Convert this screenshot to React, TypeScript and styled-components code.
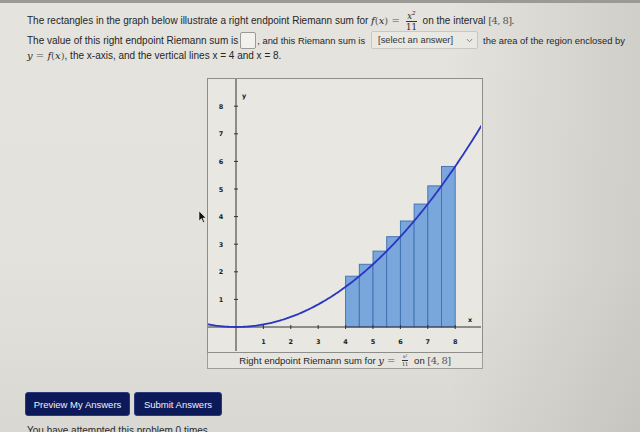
import React from "react";
import styled, { createGlobalStyle } from "styled-components";

const Global = createGlobalStyle`
  html, body { margin: 0; padding: 0; }
  body {
    width: 640px;
    height: 432px;
    overflow: hidden;
    font-family: "Liberation Sans", Arial, sans-serif;
    color: #262626;
    background:
      linear-gradient(90deg, rgba(0,0,0,0) 70%, rgba(60,60,50,0.12) 100%),
      linear-gradient(180deg, #e4e3de 0%, #e3e2dd 60%, #d9d8d2 100%);
  }
`;

const Page = styled.div`
  position: relative;
  width: 640px;
  height: 432px;
  box-sizing: border-box;
  padding: 5px 0 0 27px;
  border-top: 3px solid #9a9a96;
`;

const Line = styled.div<{ $h: number; $mt?: number }>`
  display: flex;
  align-items: center;
  height: ${(p) => p.$h}px;
  margin-top: ${(p) => p.$mt ?? 0}px;
  font-size: 10px;
  white-space: pre;
`;

const Seg = styled.span<{ $s: number }>`
  font-size: ${(p) => p.$s}px;
`;

const MathI = styled.span`
  font-family: "DejaVu Serif", "Liberation Serif", serif;
  font-style: italic;
  font-size: 10px;
`;

const MathR = styled.span<{ $tight?: boolean }>`
  font-family: "DejaVu Serif", "Liberation Serif", serif;
  font-size: 10px;
  color: #555;
  letter-spacing: ${(p) => (p.$tight ? "-0.6px" : "0")};
`;

const Frac = styled.span<{ $s?: number }>`
  display: inline-flex;
  flex-direction: column;
  align-items: center;
  margin: 0 3px;
  font-family: "DejaVu Serif", "Liberation Serif", serif;
  font-size: ${(p) => p.$s ?? 8.5}px;
  line-height: ${(p) => (p.$s ?? 8.5) + 2}px;
`;

const FracTop = styled.span`
  font-style: italic;
  border-bottom: 0.8px solid #333;
  padding: 0 1px;
`;

const Sup = styled.sup`
  font-size: 0.65em;
`;

const AnswerBox = styled.span`
  display: inline-block;
  width: 14px;
  height: 15px;
  margin: 0 1px 0 2px;
  border: 1px solid #9a9a96;
  border-radius: 2px;
  background: #f2f1ed;
`;

const Select = styled.span`
  display: inline-flex;
  align-items: center;
  justify-content: space-between;
  box-sizing: border-box;
  width: 107px;
  height: 18px;
  margin: 0 5px 0 6px;
  padding: 0 4px 0 6px;
  border: 1px solid #c8c7c2;
  border-radius: 2px;
  background: #e9e8e3;
  font-size: 9.3px;
  color: #333;
`;

const GraphBlock = styled.div`
  width: 276px;
  margin: 17px 0 0 180px;
`;

const PlotFrame = styled.div`
  width: 276px;
  height: 275px;
  box-sizing: border-box;
  border: 1.5px solid #8d8d89;
  background: #e8e7e2;
`;

const Caption = styled.div`
  height: 16px;
  box-sizing: border-box;
  border: 1px solid #9d9d99;
  border-top: none;
  display: flex;
  align-items: center;
  justify-content: center;
  font-size: 9.5px;
  white-space: pre;
  background: #e6e5e0;
`;

const ButtonRow = styled.div`
  display: flex;
  gap: 4px;
  margin: 23px 0 0 -2px;
`;

const Button = styled.button<{ $w: number }>`
  width: ${(p) => p.$w}px;
  height: 24px;
  border: 1px solid #2b3a7a;
  border-radius: 3px;
  background: #0c1a5a;
  color: #f0f0f6;
  font-family: "Liberation Sans", Arial, sans-serif;
  font-size: 9.5px;
  padding: 0;
`;

const Attempts = styled.div`
  margin-top: 9px;
  font-size: 10px;
  color: #2a2a2a;
`;

const Cursor = styled.svg`
  position: absolute;
  left: 198px;
  top: 207px;
`;

const X0 = 28;
const Y0 = 248;
const UX = 27.4;
const UY = 27.6;
const f = (x: number) => (x * x) / 11;
const px = (x: number) => X0 + x * UX;
const py = (y: number) => Y0 - y * UY;

function Plot() {
  const rects = Array.from({ length: 8 }, (_, i) => 4 + i * 0.5);
  const pts: string[] = [];
  for (let x = -1.05; x <= 9.06; x += 0.05) {
    pts.push(`${px(x).toFixed(2)},${py(f(x)).toFixed(2)}`);
  }
  const lbl = { fontFamily: "DejaVu Sans, sans-serif", fontSize: 6.5, fontWeight: 700, fill: "#222" } as const;
  return (
    <svg width="273" height="272" viewBox="0 0 273 272">
      {rects.map((a) => (
        <rect
          key={a}
          x={px(a)}
          y={py(f(a + 0.5))}
          width={UX * 0.5}
          height={f(a + 0.5) * UY}
          fill="#79a6db"
          stroke="#3e6fb2"
          strokeWidth={0.9}
        />
      ))}
      <line x1={0} y1={Y0} x2={273} y2={Y0} stroke="#333" strokeWidth={1} />
      <line x1={X0} y1={0} x2={X0} y2={272} stroke="#333" strokeWidth={1} />
      {[1, 2, 3, 4, 5, 6, 7, 8].map((n) => (
        <g key={`x${n}`}>
          <line x1={px(n)} y1={Y0 - 2} x2={px(n)} y2={Y0 + 2} stroke="#333" strokeWidth={1} />
          <text x={px(n)} y={Y0 + 17} textAnchor="middle" {...lbl}>{n}</text>
        </g>
      ))}
      {[1, 2, 3, 4, 5, 6, 7, 8].map((n) => (
        <g key={`y${n}`}>
          <line x1={X0 - 2} y1={py(n)} x2={X0 + 2} y2={py(n)} stroke="#333" strokeWidth={1} />
          <text x={13} y={py(n) + 2.5} textAnchor="middle" {...lbl}>{n}</text>
        </g>
      ))}
      <text x={34} y={19} {...lbl}>y</text>
      <text x={260} y={243} {...lbl}>x</text>
      <polyline points={pts.join(" ")} fill="none" stroke="#2a36c0" strokeWidth={1.8} />
    </svg>
  );
}

export default function App() {
  return (
    <>
      <Global />
      <Page>
        <Line $h={24}>
          The rectangles in the graph below illustrate a right endpoint Riemann sum for{" "}
          <MathI>f</MathI>
          <MathR>(</MathR>
          <MathI>x</MathI>
          <MathR>) = </MathR>
          <Frac>
            <FracTop>
              x<Sup>2</Sup>
            </FracTop>
            <span>11</span>
          </Frac>
          {" on the interval "}
          <MathR $tight>[4, 8]</MathR>.
        </Line>
        <Line $h={18} $mt={-1}>
          <Seg $s={10}>The value of this right endpoint Riemann sum is</Seg>
          <AnswerBox />
          <Seg $s={9.4}>, and this Riemann sum is</Seg>
          <Select>
            [select an answer]
            <svg width="7" height="5" viewBox="0 0 7 5">
              <path d="M0.8 1 L3.5 3.8 L6.2 1" fill="none" stroke="#777" strokeWidth="0.9" />
            </svg>
          </Select>
          <Seg $s={9.4}>the area of the region enclosed by</Seg>
        </Line>
        <Line $h={12}>
          <MathI>y</MathI>
          <MathR> = </MathR>
          <MathI>f</MathI>
          <MathR>(</MathR>
          <MathI>x</MathI>
          <MathR>)</MathR>, the x-axis, and the vertical lines x = 4 and x = 8.
        </Line>
        <GraphBlock>
          <PlotFrame>
            <Plot />
          </PlotFrame>
          <Caption>
            Right endpoint Riemann sum for <MathI>y</MathI>
            <MathR> = </MathR>
            <Frac $s={5}>
              <FracTop>x²</FracTop>
              <span>11</span>
            </Frac>
            {" on "}
            <MathR $tight>[4, 8]</MathR>
          </Caption>
        </GraphBlock>
        <ButtonRow>
          <Button $w={105}>Preview My Answers</Button>
          <Button $w={88}>Submit Answers</Button>
        </ButtonRow>
        <Attempts>You have attempted this problem 0 times.</Attempts>
        <Cursor width="9" height="14" viewBox="0 0 9 14">
          <path d="M1 1 L1 11 L3.4 8.6 L5.2 12.6 L6.6 12 L4.9 8.1 L8 8 Z" fill="#111" stroke="#eee" strokeWidth="0.6" />
        </Cursor>
      </Page>
    </>
  );
}
